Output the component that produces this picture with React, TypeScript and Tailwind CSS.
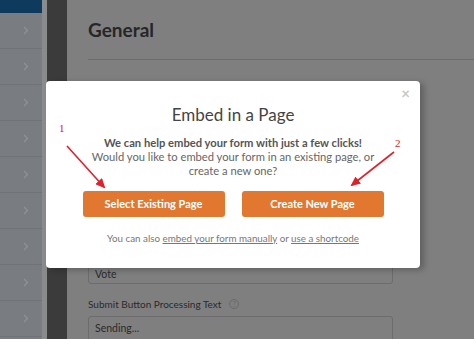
import React from "react";

function Chevron() {
  return (
    <svg width="6" height="9" viewBox="0 0 6 9" fill="none">
      <path d="M1 1l3.5 3.5L1 8" stroke="#8e9297" strokeWidth="1.3" />
    </svg>
  );
}

export default function App() {
  const rows = Array.from({ length: 9 });
  return (
    <div
      className="relative w-[474px] h-[339px] overflow-hidden flex bg-[#7f7f7f]"
      style={{ fontFamily: 'Lato, "Open Sans", sans-serif' }}
    >
      {/* sidebar */}
      <div className="w-[42px] flex flex-col bg-[#797c81] shrink-0">
        <div className="h-[13px] bg-[#0e3a5e] shrink-0" />
        {rows.map((_, i) => (
          <div
            key={i}
            className="h-[36px] shrink-0 flex items-center justify-end pr-[13px] border-b border-[#6f7277]"
          >
            <Chevron />
          </div>
        ))}
      </div>
      <div className="w-[5px] bg-[#8a8b8d] shrink-0" />
      <div className="w-[20px] bg-[#3b3b3b] shrink-0" />
      {/* main */}
      <div className="flex-1 flex flex-col pl-[21px]">
        <div className="h-[60px] shrink-0 border-b border-[#6c6c6c] flex items-start pt-[16px]">
          <h1 className="text-[19px] font-bold text-[#262626] leading-[28px]">General</h1>
        </div>
        <div className="shrink-0 mt-[197px] w-[305px] h-[27px] border border-[#6c6c6c] rounded-[3px] flex items-end pb-[3px] px-[6px] text-[10.5px] leading-[12px] text-[#2a2a2a]">
          Vote
        </div>
        <div className="shrink-0 mt-[14px] flex items-center gap-[8px] text-[10px] leading-[12px] text-[#2a2a2a]">
          <span>Submit Button Processing Text</span>
          <span className="w-[10px] h-[10px] rounded-full border border-[#6a6a6a] text-[7px] leading-none flex items-center justify-center text-[#6a6a6a]">
            ?
          </span>
        </div>
        <div className="shrink-0 mt-[6px] w-[305px] h-[27px] border border-[#6c6c6c] rounded-[3px] flex items-start pt-[5px] px-[6px] text-[10.5px] leading-[12px] text-[#2a2a2a]">
          Sending...
        </div>
      </div>

      {/* modal */}
      <div className="absolute left-[46px] top-[81px] w-[374px] h-[187px] bg-white rounded-[4px] shadow-[4px_2px_6px_rgba(0,0,0,0.25)] flex flex-col items-center">
        <span className="absolute right-[10px] top-[5px] text-[#c8c8c8] text-[15px] font-bold leading-none">×</span>
        <h2 className="mt-[22px] text-[17px] leading-[24px] text-[#444]">Embed in a Page</h2>
        <p className="mt-[9px] text-center text-[11.2px] leading-[14px] text-[#666]">
          <span className="font-bold text-[#555]">We can help embed your form with just a few clicks!</span>
          <br />
          Would you like to embed your form in an existing page, or
          <br />
          create a new one?
        </p>
        <div className="mt-[13px] flex gap-[17px]">
          <button className="w-[142px] h-[26px] rounded-[3px] bg-[#e27730] text-white text-[11px] font-bold">
            Select Existing Page
          </button>
          <button className="w-[142px] h-[26px] rounded-[3px] bg-[#e27730] text-white text-[11px] font-bold">
            Create New Page
          </button>
        </div>
        <p className="mt-[14px] text-[9.8px] text-[#777]">
          You can also <span className="underline">embed your form manually</span> or{" "}
          <span className="underline">use a shortcode</span>
        </p>
      </div>

      {/* annotations */}
      <span
        className="absolute left-[59px] top-[123px] text-[11px] leading-none text-[#e0202a]"
        style={{ fontFamily: '"Liberation Serif", serif' }}
      >
        1
      </span>
      <span
        className="absolute left-[395px] top-[138px] text-[11px] leading-none text-[#e0202a]"
        style={{ fontFamily: '"Liberation Serif", serif' }}
      >
        2
      </span>
      <svg className="absolute left-0 top-0" width="474" height="339" viewBox="0 0 474 339">
        <defs>
          <marker id="ah" markerWidth="10" markerHeight="9" refX="8" refY="4.5" orient="auto" markerUnits="userSpaceOnUse">
            <path d="M0 0L10 4.5L0 9z" fill="#e0202a" />
          </marker>
        </defs>
        <line x1="67" y1="146" x2="104" y2="187" stroke="#e0202a" strokeWidth="1.6" markerEnd="url(#ah)" />
        <line x1="394" y1="152" x2="352" y2="185" stroke="#e0202a" strokeWidth="1.6" markerEnd="url(#ah)" />
      </svg>
    </div>
  );
}
